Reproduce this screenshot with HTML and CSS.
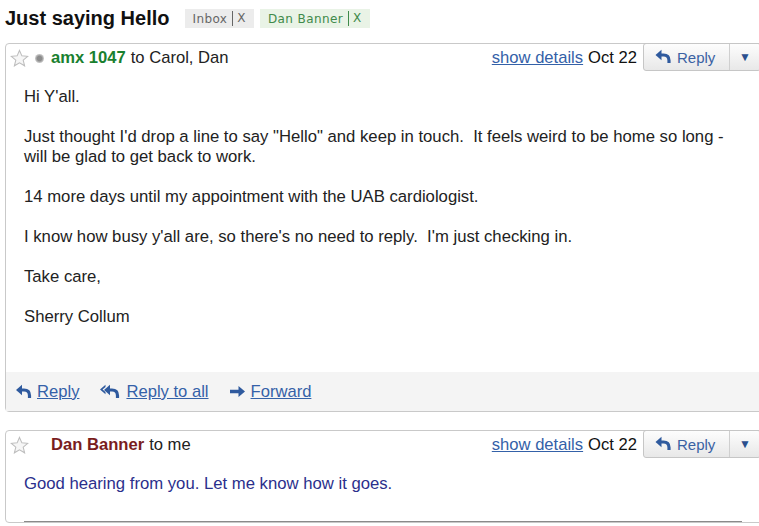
FILE: index.html
```html
<!DOCTYPE html>
<html lang="en">
<head>
  <meta charset="UTF-8" />
  <title>Just saying Hello</title>
  <link rel="stylesheet" href="styles.css">
</head>
<body>
  <div class="thread-title">
    <h1>Just saying Hello</h1>
    <span class="label label-inbox">Inbox<span class="label-x">X</span></span>
    <span class="label label-dan">Dan Banner<span class="label-x">X</span></span>
  </div>

  <div class="message">
    <div class="msg-head">
      <svg class="star" viewBox="0 0 20 20"><path d="M10 1.5 L12.5 7.2 L18.6 7.7 L13.9 11.7 L15.4 17.7 L10 14.5 L4.6 17.7 L6.1 11.7 L1.4 7.7 L7.5 7.2 Z" /></svg>
      <span class="presence"></span>
      <span class="sender sender-green">amx 1047</span>
      <span class="recipients">to Carol, Dan</span>
      <span class="spacer"></span>
      <a class="details" href="#">show details</a>
      <span class="date">Oct 22</span>
      <div class="reply-btn">
        <span class="reply-main">
          <svg viewBox="0 0 16 16"><path class="head" d="M0.5 6 L6.5 0.8 V11.2 Z" /><path class="tail" d="M5 6 H8.5 C12 6 14 8 14 11.5 V14" /></svg>
          Reply
        </span>
        <span class="reply-more">&#9660;</span>
      </div>
    </div>
    <div class="msg-body">
      <p>Hi Y'all.</p>
      <p>Just thought I'd drop a line to say "Hello" and keep in touch.&nbsp; It feels weird to be home so long - will be glad to get back to work.</p>
      <p>14 more days until my appointment with the UAB cardiologist.</p>
      <p>I know how busy y'all are, so there's no need to reply.&nbsp; I'm just checking in.</p>
      <p>Take care,</p>
      <p>Sherry Collum</p>
    </div>
    <div class="msg-actions">
      <a href="#" class="action">
        <svg viewBox="0 0 16 16"><path class="head" d="M0.5 6 L6.5 0.8 V11.2 Z" /><path class="tail" d="M5 6 H8.5 C12 6 14 8 14 11.5 V14" /></svg>
        <span>Reply</span>
      </a>
      <a href="#" class="action action-all">
        <svg viewBox="0 0 21 16"><path class="head" d="M0.5 5.5 L6 0.8 V3 L3 5.5 L6 8 V10.2 Z" /><path class="head" d="M4.5 6 L10.5 0.8 V11.2 Z" /><path class="tail" d="M9 6 H12.5 C16 6 18 8 18 11.5 V14" /></svg>
        <span>Reply to all</span>
      </a>
      <a href="#" class="action">
        <svg viewBox="0 0 16 16"><path class="head" d="M0.5 5.8 H9 V2 L15.5 7.5 L9 13 V9.2 H0.5 Z" /></svg>
        <span>Forward</span>
      </a>
    </div>
  </div>

  <div class="message">
    <div class="msg-head">
      <svg class="star" viewBox="0 0 20 20"><path d="M10 1.5 L12.5 7.2 L18.6 7.7 L13.9 11.7 L15.4 17.7 L10 14.5 L4.6 17.7 L6.1 11.7 L1.4 7.7 L7.5 7.2 Z" /></svg>
      <span class="presence empty"></span>
      <span class="sender sender-red">Dan Banner</span>
      <span class="recipients">to me</span>
      <span class="spacer"></span>
      <a class="details" href="#">show details</a>
      <span class="date">Oct 22</span>
      <div class="reply-btn">
        <span class="reply-main">
          <svg viewBox="0 0 16 16"><path class="head" d="M0.5 6 L6.5 0.8 V11.2 Z" /><path class="tail" d="M5 6 H8.5 C12 6 14 8 14 11.5 V14" /></svg>
          Reply
        </span>
        <span class="reply-more">&#9660;</span>
      </div>
    </div>
    <div class="msg-body short">
      <p class="navy">Good hearing from you. Let me know how it goes.</p>
      <hr class="quote-rule">
    </div>
  </div>
</body>
</html>
```

FILE: styles.css
```css
:root {
  --link: #3461a8;
  --icon: #2f5a9e;
  --border: #c9c9c9;
  --text: #222;
}

* {
  box-sizing: border-box;
}

body {
  margin: 0;
  padding: 0 0 0 5px;
  background: #fff;
  font-family: 'Liberation Sans', Arial, sans-serif;
  color: var(--text);
  overflow: hidden;
  width: 759px;
  height: 526px;
}

.thread-title {
  display: flex;
  align-items: center;
  height: 36px;
  padding-top: 1px;
  margin-bottom: 7px;
}

.thread-title h1 {
  margin: 0 15px 0 0;
  font-size: 20px;
  font-weight: bold;
  color: #111;
}

.label {
  display: inline-flex;
  align-items: center;
  height: 19px;
  padding: 0 8px 0 8px;
  margin-right: 6px;
  font-family: 'DejaVu Sans', sans-serif;
  font-size: 12px;
  letter-spacing: 0.4px;
}

.label-x {
  margin-left: 5px;
  padding-left: 4px;
  border-left: 1px solid currentColor;
  line-height: 15px;
}

.label-inbox {
  background: #ececec;
  color: #666;
}

.label-dan {
  background: #e9f3e6;
  color: #3f8a4a;
}

.message {
  width: 770px;
  border: 1px solid var(--border);
  border-radius: 4px 0 0 4px;
  margin-bottom: 18px;
}

.msg-head {
  display: flex;
  align-items: center;
  height: 28px;
  padding-left: 4px;
  font-size: 16.6px;
}

.star {
  width: 19px;
  height: 19px;
  fill: #f6f6f6;
  stroke: #bdbdbd;
  stroke-width: 1.1;
}

.presence {
  width: 9px;
  height: 9px;
  margin: 1px 7px 0 6px;
  border-radius: 50%;
  background: radial-gradient(circle, #8c8c8c 35%, #c4c4c4 65%);
}

.presence.empty {
  background: none;
}

.sender {
  font-weight: bold;
  margin-right: 5px;
}

.sender-green {
  color: #19802f;
}

.sender-red {
  color: #7a1d1d;
}

.spacer {
  flex: 1;
}

.details {
  color: var(--link);
  margin-right: 5px;
}

.date {
  color: #111;
  margin-right: 6px;
}

.reply-btn {
  display: flex;
  align-self: flex-start;
  height: 28px;
  margin-top: -1px;
  margin-right: 13px;
  border: 1px solid #c6c6c6;
  border-radius: 3px;
  background: linear-gradient(#fdfdfd, #e8e8e8);
  color: #3a62a3;
  font-size: 15px;
}

.reply-main {
  display: flex;
  align-items: center;
  gap: 6px;
  width: 86px;
  padding-left: 11px;
  border-right: 1px solid #cfcfcf;
}

svg .head {
  fill: var(--icon);
}

svg .tail {
  fill: none;
  stroke: var(--icon);
  stroke-width: 3.2;
}

.reply-main svg {
  width: 16px;
  height: 16px;
}

.reply-more {
  display: flex;
  align-items: center;
  justify-content: center;
  width: 30px;
  font-size: 12px;
  color: #2b4f8e;
}

.msg-body {
  padding: 15px 18px 45px;
  font-size: 16.7px;
  line-height: 20px;
}

.msg-body p {
  margin: 0 0 20px;
  max-width: 705px;
}

.msg-body p:last-child {
  margin-bottom: 0;
}

.msg-body.short {
  padding: 15px 18px 0;
}

.msg-body .navy {
  color: #2b2f8c;
  margin-bottom: 0;
}

.quote-rule {
  width: 718px;
  margin: 27px 0 0 0;
  border: none;
  border-top: 1px solid #8a8a8a;
}

.msg-actions {
  display: flex;
  align-items: center;
  height: 39px;
  padding-left: 9px;
  background: #f4f4f4;
  font-size: 16.6px;
}

.action {
  display: flex;
  align-items: center;
  gap: 5px;
  margin-right: 20px;
  color: var(--link);
}

.action svg {
  width: 17px;
  height: 16px;
}

.action-all svg {
  width: 22px;
}
```
